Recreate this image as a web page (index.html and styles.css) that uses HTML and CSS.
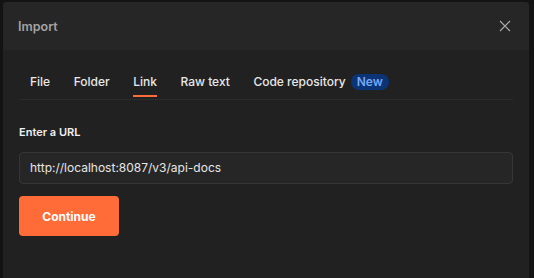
FILE: index.html
```html
<!DOCTYPE html>
<html lang="en">
<head>
<meta charset="utf-8">
<title>Import</title>
<link rel="stylesheet" href="styles.css">
</head>
<body>
<div class="modal">
  <div class="modal-header">
    <span class="modal-title">Import</span>
    <button class="close-btn" aria-label="Close">
      <svg width="12" height="12" viewBox="0 0 12 12"><path d="M1 1L11 11M11 1L1 11" stroke="#a8a8a8" stroke-width="1.2" fill="none"/></svg>
    </button>
  </div>
  <div class="modal-body">
    <div class="tabs">
      <div class="tab">File</div>
      <div class="tab">Folder</div>
      <div class="tab active">Link</div>
      <div class="tab">Raw text</div>
      <div class="tab">Code repository <span class="badge">New</span></div>
    </div>
    <div class="divider"></div>
    <div class="label">Enter a URL</div>
    <div class="input">http://localhost:8087/v3/api-docs</div>
    <button class="continue">Continue</button>
  </div>
</div>
</body>
</html>
```

FILE: styles.css
```css
* { box-sizing: border-box; }
html, body { margin: 0; padding: 0; }
body {
  background: #131313;
  font-family: Inter, "Noto Sans", sans-serif;
  width: 534px;
  height: 278px;
  overflow: hidden;
  padding: 2px 0 0 3px;
}
.modal {
  width: 526px;
  height: 276px;
  background: #212121;
  border-radius: 4px 4px 0 0;
  overflow: hidden;
}
.modal-header {
  height: 48px;
  background: #262626;
  display: flex;
  align-items: center;
  justify-content: space-between;
  padding: 0 18px 0 15px;
}
.modal-title {
  color: #a3a3a3;
  font-size: 12.5px;
  font-weight: 600;
}
.close-btn {
  background: none;
  border: 0;
  padding: 0;
  width: 12px;
  height: 12px;
  display: flex;
}
.modal-body {
  padding: 22px 16px 0 16px;
}
.tabs {
  display: flex;
  gap: 1.5px;
}
.tab {
  color: #e8e8e8;
  font-size: 12px;
  font-weight: 500;
  line-height: 20px;
  padding: 0 11px 5px 11px;
  position: relative;
  display: flex;
  align-items: center;
  gap: 5px;
}
.tab.active::after {
  content: "";
  position: absolute;
  left: 11px;
  right: 11px;
  bottom: 0;
  height: 2px;
  background: #ff6c37;
}
.badge {
  background: #0a3475;
  color: #77a6f4;
  font-size: 12px;
  font-weight: 600;
  line-height: 16px;
  padding: 0 6px;
  border-radius: 8px;
}
.divider {
  height: 1px;
  background: #2c2c2c;
  margin-top: 2px;
}
.label {
  margin-top: 24px;
  color: #f0f0f0;
  font-size: 11px;
  font-weight: 600;
  line-height: 16px;
}
.input {
  margin-top: 12px;
  height: 32px;
  border: 1px solid #363636;
  background: #262626;
  border-radius: 4px;
  color: #e6e6e6;
  font-size: 12px;
  line-height: 30px;
  padding: 0 10px;
}
.continue {
  margin-top: 12px;
  width: 100px;
  height: 40px;
  border: 0;
  border-radius: 4px;
  background: #ff6c37;
  color: #ffffff;
  font-family: Inter, "Noto Sans", sans-serif;
  font-size: 12px;
  font-weight: 700;
  display: block;
}
```
